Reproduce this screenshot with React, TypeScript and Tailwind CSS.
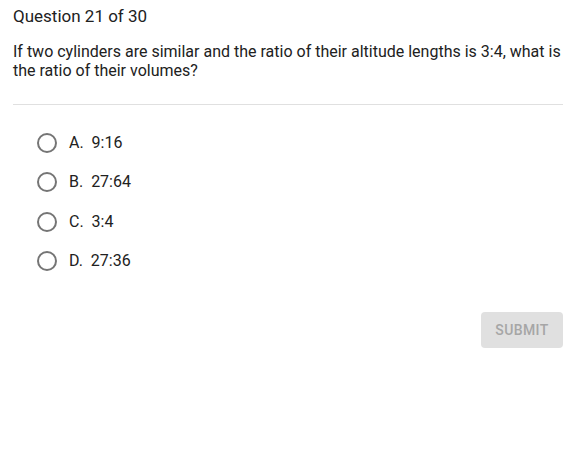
import React from "react";

const options = [
  { l: "A.", v: "9:16" },
  { l: "B.", v: "27:64" },
  { l: "C.", v: "3:4" },
  { l: "D.", v: "27:36" },
];

function Radio() {
  return (
    <svg width="24" height="24" viewBox="0 0 24 24" className="shrink-0">
      <circle cx="12" cy="12" r="9" fill="none" stroke="#757575" strokeWidth="2" />
    </svg>
  );
}

export default function App() {
  return (
    <div
      className="w-[574px] h-[476px] bg-white text-[#212121] pl-[13px] pr-[11px]"
      style={{ fontFamily: "Roboto, 'Liberation Sans', sans-serif" }}
    >
      <div className="pt-[6px] text-[17px] leading-[20px]">Question 21 of 30</div>
      <div className="mt-[16px] text-[16px] leading-[19px]">
        If two cylinders are similar and the ratio of their altitude lengths is 3:4, what is the ratio of their volumes?
      </div>
      <div className="mt-[24px] h-px bg-[#e0e0e0]" />
      <div className="mt-[18px] pl-[22px] flex flex-col">
        {options.map((o) => (
          <div key={o.l} className="h-[39.5px] flex items-center">
            <Radio />
            <span className="ml-[10px] text-[16px] leading-[20px] whitespace-pre">
              {o.l}  {o.v}
            </span>
          </div>
        ))}
      </div>
      <div className="mt-[31px] flex justify-end">
        <button
          disabled
          className="w-[82px] h-[36px] rounded-[4px] bg-[#e0e0e0] text-[#a6a6a6] text-[14px] font-medium uppercase tracking-[0.4px]"
        >
          Submit
        </button>
      </div>
    </div>
  );
}
